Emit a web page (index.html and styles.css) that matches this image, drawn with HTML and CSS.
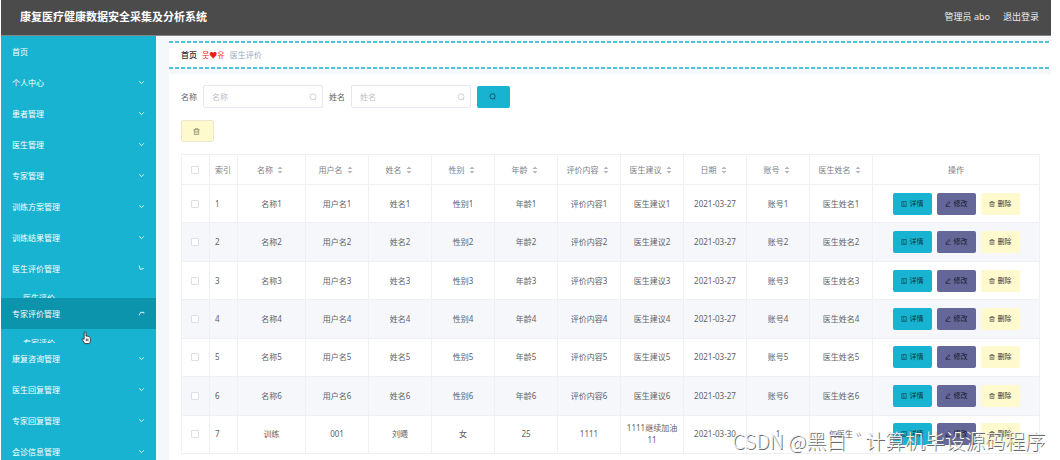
FILE: index.html
```html
<!DOCTYPE html>
<html lang="zh-CN">
<head>
<meta charset="utf-8">
<title>康复医疗健康数据安全采集及分析系统</title>
<link rel="stylesheet" href="styles.css">
</head>
<body>
<svg class="sprite" aria-hidden="true">
  <symbol id="chevron" viewBox="0 0 12 12"><path d="M2 4l4 4 4-4"/></symbol>
  <symbol id="opening" viewBox="0 0 12 12"><path d="M2 1l2 6.500 6-1.500"/></symbol>
  <symbol id="closing" viewBox="0 0 12 12"><path d="M2 9l2.500-5H10v2"/></symbol>
  <symbol id="search" viewBox="0 0 16 16"><circle cx="8" cy="7.500" r="6"/><path d="M11 12l3 2.500"/></symbol>
  <symbol id="trash" viewBox="0 0 16 16"><path d="M1 4h14M5 4V1.500h6V4M3 4v11h10V4M6.500 7v5M9.500 7v5"/></symbol>
  <symbol id="detail" viewBox="0 0 16 16"><path d="M2 1.500h12v13H2zM5 5h4M5 8h2M5 11h6"/></symbol>
  <symbol id="edit" viewBox="0 0 16 16"><path d="M3 10l7-8.500 3 2.500-7 8.500-3.500 1zM2 15h13"/></symbol>
  <symbol id="sort" viewBox="0 0 12 16"><path d="M6 1l5 5H1zM6 15l5-5H1z"/></symbol>
</svg>
<div class="app">
  <header class="topbar">
    <h1 class="title">康复医疗健康数据安全采集及分析系统</h1>
    <div class="account"><span>管理员 abo</span><a href="#">退出登录</a></div>
  </header>
  <div class="body">
    <nav class="sidebar" id="menu"></nav>
    <main class="main">
      <div class="crumbs"><a href="#">首页</a><span class="sep">웃♥유</span><span class="here">医生评价</span></div>
      <section class="card">
        <form class="filters">
          <label for="f1">名称</label>
          <div class="field"><input id="f1" type="text" placeholder="名称"><svg class="icon"><use href="#search"/></svg></div>
          <label for="f2">姓名</label>
          <div class="field"><input id="f2" type="text" placeholder="姓名"><svg class="icon"><use href="#search"/></svg></div>
          <button class="btn square find" type="button" aria-label="查询"><svg class="icon"><use href="#search"/></svg></button>
        </form>
        <div class="tools"><button class="btn square remove outlined" type="button" aria-label="删除"><svg class="icon"><use href="#trash"/></svg></button></div>
        <table class="grid">
          <colgroup><col class="c-narrow"><col class="c-narrow"><col class="c-name"><col span="9"><col class="c-actions"></colgroup>
          <thead><tr id="head"></tr></thead>
          <tbody id="rows"></tbody>
        </table>
      </section>
    </main>
  </div>
  <svg class="cursor" viewBox="0 0 16 22" aria-hidden="true"><path d="M5 12V2.500q0-1.500 1.500-1.500T8 2.500V8q2-1 3 .500 2-.5 2.500 1 1.500 0 1.500 2V15q0 3-2 5H6q-1-2-4.500-7 1.500-2 3.500 0z"/><path d="M8.500 12v4M11 12v4"/></svg>
  <div class="watermark">CSDN @黑白&nbsp;&nbsp;ﾞ计算机毕设源码程序</div>
</div>
<script src="app.js"></script>
</body>
</html>
```
FILE: styles.css
```css
* { box-sizing: border-box; }
body {
  margin: 0;
  background: #fff;
  color: #606266;
  font: 8px/12px "Noto Sans", "Noto Sans CJK SC", "Noto Sans CJK KR", sans-serif;
}
a { color: inherit; text-decoration: none; }
button, input { font: inherit; }
.sprite { position: absolute; width: 0; height: 0; }
.app {
  position: relative;
  display: flex;
  flex-direction: column;
  height: 100vh;
  margin: 0 9px 0 1px;
  overflow: hidden;
}
.topbar {
  display: flex;
  flex: none;
  align-items: center;
  justify-content: space-between;
  height: 36px;
  padding: 0 12px 2px 19px;
  background: #4b4b4b;
  border-bottom: 1px solid #858585;
  color: #fff;
}
.title { margin: 0; font-size: 11px; line-height: 16px; }
.account { display: flex; gap: 13px; font-size: 9px; color: #eee; }
.body { display: flex; flex: 1; min-height: 0; }
.sidebar { flex: none; width: 155px; overflow: hidden; background: #17b3d0; color: #fff; }
.item {
  display: flex;
  align-items: center;
  justify-content: space-between;
  height: 31px;
  padding: 0 11px;
}
.item.active { background: #0c94ad; }
.item .icon { width: 7px; height: 7px; }
.sub { display: block; height: 14px; padding: 8px 22px 0; overflow: hidden; }
.icon { flex: none; width: 8px; height: 8px; fill: none; stroke: currentColor; stroke-width: 1.5; }
.main {
  display: flex;
  flex: 1;
  flex-direction: column;
  gap: 5px;
  min-width: 0;
  padding: 5px 0 0 13px;
  background: #f5f8fb;
}
.crumbs {
  --dash: repeating-linear-gradient(90deg, #4fc3da 0 4px, #fff 4px 6px);
  display: flex;
  flex: none;
  align-items: center;
  gap: 5px;
  height: 28px;
  padding: 0 12px;
  background: var(--dash) top / 100% 2px no-repeat, var(--dash) bottom / 100% 2px no-repeat, #fff;
  color: #303133;
}
.crumbs a { font-weight: 500; }
.sep { color: #f21a0c; }
.here { color: #97a8be; }
.card { flex: 1; padding: 11px 11px 0 12px; background: #fff; }
.filters { display: flex; align-items: center; gap: 6px; height: 23px; }
.field {
  display: flex;
  align-items: center;
  width: 120px;
  height: 23px;
  padding: 0 5px 0 8px;
  border: 1px solid #e4e7ed;
  border-radius: 2px;
  color: #c0c4cc;
}
.field input { flex: 1; min-width: 0; padding: 0; border: 0; outline: 0; color: #606266; background: none; }
.field input::placeholder { color: #bcc0c8; }
.tools { padding: 12px 0; }
.btn {
  display: inline-flex;
  align-items: center;
  justify-content: center;
  gap: 3px;
  width: 39px;
  height: 22px;
  padding: 0;
  border: 0;
  border-radius: 2px;
  color: #333;
  font-size: 7px;
}
.btn .icon { width: 6px; height: 6px; }
.btn.square { width: 33px; padding-right: 2px; }
.btn.square .icon { width: 7px; height: 7px; }
.find, .detail { background: #17b3d0; color: #0b333c; }
.edit { background: #666799; color: #15152c; }
.remove { background: #fffacd; }
.outlined { border: 1px solid #ebe7cf; color: #77755f; }
.grid {
  width: 100%;
  height: 300px;
  table-layout: fixed;
  border-collapse: separate;
  border-spacing: 0;
  border: solid #f0f1f4;
  border-width: 1px 0 0 1px;
}
.c-narrow { width: 28px; }
.c-name { width: 68px; }
.c-actions { width: 167px; }
.grid th, .grid td {
  height: 38px;
  padding: 0 5px;
  border: solid #eef0f4;
  border-width: 0 1px 1px 0;
  font-weight: 400;
  text-align: center;
}
.grid th { height: 30px; color: #7d8086; }
.grid .index { text-align: left; }
.grid tr:nth-child(even) td { background: #f5f7fa; }
.sort { width: 6px; height: 8px; margin: 0 3px 0 4px; vertical-align: -1px; fill: #b4b7bf; }
.actions { display: flex; justify-content: center; gap: 5px; }
.check {
  display: block;
  appearance: none;
  width: 8px;
  height: 8px;
  margin: 0 0 0 4px;
  border: 1px solid #dcdfe6;
  border-radius: 1px;
  background: #fff;
}
.cursor { position: absolute; left: 80px; top: 331px; width: 10px; height: 14px; fill: #fff; stroke: #333; stroke-width: 1.5; }
.watermark {
  position: absolute;
  right: 6px;
  bottom: 4px;
  font: 300 20px/30px "Noto Sans CJK SC", sans-serif;
  color: #f2f2f2;
  text-shadow: 1px 1px 0 #6a6a6a;
  white-space: nowrap;
}
```
FILE: app.js
```js
const icon = (name, cls = "icon") => `<svg class="${cls}"><use href="#${name}"/></svg>`;
const item = (text, glyph, cls = "") => `<a class="item ${cls}" href="#">${text}${glyph ? icon(glyph) : ""}</a>`;
const sub = (text) => `<a class="sub" href="#">${text}</a>`;

document.getElementById("menu").innerHTML =
  item("首页") +
  ["个人中心", "患者管理", "医生管理", "专家管理", "训练方案管理", "训练结果管理"].map((t) => item(t, "chevron")).join("") +
  item("医生评价管理", "opening") + sub("医生评价") +
  item("专家评价管理", "closing", "active") + sub("专家评价") +
  ["康复咨询管理", "医生回复管理", "专家回复管理", "会诊信息管理"].map((t) => item(t, "chevron")).join("");

const fields = ["名称", "用户名", "姓名", "性别", "年龄", "评价内容", "医生建议", "日期", "账号", "医生姓名"];
const check = (label) => `<input class="check" type="checkbox" aria-label="${label}">`;

document.getElementById("head").innerHTML =
  `<th>${check("全选")}</th><th class="index">索引</th>` +
  fields.map((f) => `<th>${f}${icon("sort", "sort")}</th>`).join("") + "<th>操作</th>";

const records = [1, 2, 3, 4, 5, 6].map((n) => fields.map((f) => (f === "日期" ? "2021-03-27" : f + n)));
records.push(["训练", "001", "刘曦", "女", "25", "1111", "1111继续加油11", "2021-03-30", "1", "何医生"]);

const button = (cls, glyph, text) => `<button class="btn ${cls}" type="button">${icon(glyph)}${text}</button>`;
document.getElementById("rows").innerHTML = records.map((r, i) =>
  `<tr><td>${check("选择第" + (i + 1) + "行")}</td><td class="index">${i + 1}</td>` +
  r.map((v) => `<td>${v}</td>`).join("") +
  `<td><div class="actions">${button("detail", "detail", "详情")}${button("edit", "edit", "修改")}${button("remove", "trash", "删除")}</div></td></tr>`
).join("");
```
